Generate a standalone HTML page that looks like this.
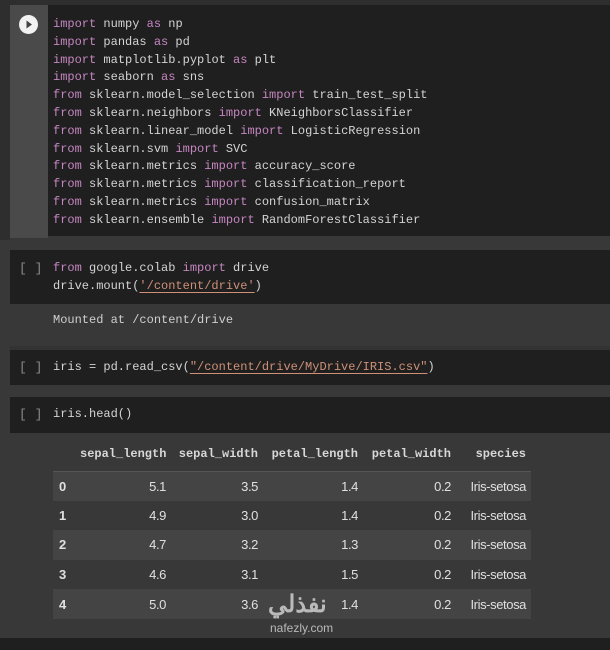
<!DOCTYPE html>
<html><head><meta charset="utf-8"><style>
*{margin:0;padding:0;box-sizing:border-box}
body{width:610px;height:650px;background:#383838;position:relative;overflow:hidden;font-family:"Liberation Mono",monospace;font-size:12px;color:#d4d4d4}
.abs{position:absolute}
.code{background:#1f1f1f}
pre{font-family:"Liberation Mono",monospace;font-size:12px;line-height:17.8px;color:#d4d4d4}
.k{color:#c586c0}
.s{color:#ce9178;text-decoration:underline;text-decoration-color:#ce9178;text-underline-offset:3px}
.br{color:#8a8a8a;font-size:13px}
table{border-collapse:collapse;table-layout:fixed;font-family:"Liberation Sans",Arial,sans-serif;font-size:13px;color:#e0e0e0;letter-spacing:-0.4px}
th{font-family:"Liberation Mono",monospace;font-size:12px;font-weight:bold;color:#d8d8d8;text-align:right;height:34px;padding:0 5px 0 0;letter-spacing:0;white-space:nowrap}
td{height:29.6px;text-align:right;padding:0 5px}
td:first-child{text-align:left;font-weight:bold;padding-left:6px}
tbody tr:nth-child(odd){background:#444444}
thead tr{border-bottom:1px solid #555}
</style></head><body>
<div class="abs" style="left:0;top:0;width:610px;height:5px;background:#2e2e2e"></div>
<div class="abs" style="left:0;top:0;width:10px;height:240px;background:#2e2e2e"></div>
<div class="abs" style="left:10px;top:5px;width:38px;height:233px;background:#4a4a4a"></div>
<div class="abs code" style="left:48px;top:5px;width:562px;height:231px"></div>
<div class="abs" style="left:19px;top:15px;width:19px;height:19px;border-radius:50%;background:#f2f2f2"></div>
<svg class="abs" style="left:19px;top:15px" width="19" height="19"><path d="M7.5 5.5 L13 9.5 L7.5 13.5Z" fill="#444"/></svg>
<pre class="abs" style="left:53px;top:16px"><span class="k">import</span> numpy <span class="k">as</span> np
<span class="k">import</span> pandas <span class="k">as</span> pd
<span class="k">import</span> matplotlib.pyplot <span class="k">as</span> plt
<span class="k">import</span> seaborn <span class="k">as</span> sns
<span class="k">from</span> sklearn.model_selection <span class="k">import</span> train_test_split
<span class="k">from</span> sklearn.neighbors <span class="k">import</span> KNeighborsClassifier
<span class="k">from</span> sklearn.linear_model <span class="k">import</span> LogisticRegression
<span class="k">from</span> sklearn.svm <span class="k">import</span> SVC
<span class="k">from</span> sklearn.metrics <span class="k">import</span> accuracy_score
<span class="k">from</span> sklearn.metrics <span class="k">import</span> classification_report
<span class="k">from</span> sklearn.metrics <span class="k">import</span> confusion_matrix
<span class="k">from</span> sklearn.ensemble <span class="k">import</span> RandomForestClassifier</pre>

<div class="abs code" style="left:10px;top:250px;width:600px;height:54px"></div>
<div class="abs br" style="left:19px;top:261px">[ ]</div>
<pre class="abs" style="left:53px;top:260px"><span class="k">from</span> google.colab <span class="k">import</span> drive
drive.mount(<span class="s">'/content/drive'</span>)</pre>
<pre class="abs" style="left:53px;top:312px;color:#cfcfcf">Mounted at /content/drive</pre>
<div class="abs" style="left:10px;top:346px;width:600px;height:4px;background:#333"></div>

<div class="abs code" style="left:10px;top:350px;width:600px;height:35px"></div>
<div class="abs br" style="left:19px;top:360px">[ ]</div>
<pre class="abs" style="left:53px;top:359px">iris = pd.read_csv(<span class="s">"/content/drive/MyDrive/IRIS.csv"</span>)</pre>

<div class="abs code" style="left:10px;top:397px;width:600px;height:36px"></div>
<div class="abs br" style="left:19px;top:407px">[ ]</div>
<pre class="abs" style="left:53px;top:406px">iris.head()</pre>

<table class="abs" style="left:53px;top:437px;width:478px">
<colgroup><col style="width:27px"><col style="width:91px"><col style="width:92px"><col style="width:100px"><col style="width:93px"><col style="width:75px"></colgroup>
<thead><tr><th></th><th>sepal_length</th><th>sepal_width</th><th>petal_length</th><th>petal_width</th><th>species</th></tr></thead>
<tbody>
<tr><td>0</td><td>5.1</td><td>3.5</td><td>1.4</td><td>0.2</td><td>Iris-setosa</td></tr>
<tr><td>1</td><td>4.9</td><td>3.0</td><td>1.4</td><td>0.2</td><td>Iris-setosa</td></tr>
<tr><td>2</td><td>4.7</td><td>3.2</td><td>1.3</td><td>0.2</td><td>Iris-setosa</td></tr>
<tr><td>3</td><td>4.6</td><td>3.1</td><td>1.5</td><td>0.2</td><td>Iris-setosa</td></tr>
<tr><td>4</td><td>5.0</td><td>3.6</td><td>1.4</td><td>0.2</td><td>Iris-setosa</td></tr>
</tbody></table>
<div class="abs" style="left:268px;top:590px;font-family:'Liberation Sans','Noto Sans CJK SC',sans-serif;font-size:24px;font-weight:bold;color:#cfcfcf;opacity:.85">نفذلي</div>
<div class="abs" style="left:270px;top:621px;font-family:'Liberation Sans',sans-serif;font-size:12px;color:#cfcfcf;opacity:.85">nafezly.com</div>
<div class="abs" style="left:0;top:638px;width:610px;height:12px;background:#1f1f1f"></div>
</body></html>
